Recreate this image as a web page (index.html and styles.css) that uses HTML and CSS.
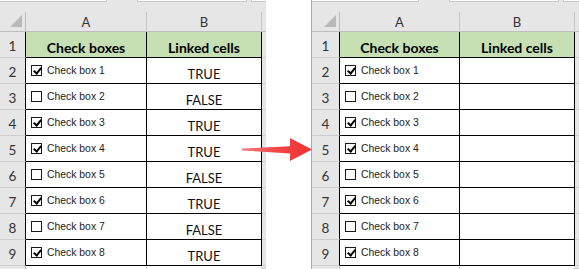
FILE: index.html
```html
<!DOCTYPE html>
<html>
<head>
<meta charset="utf-8">
<link rel="stylesheet" href="styles.css">
</head>
<body>
<div class="page">
  <div class="sheet left">
    <div class="topbar"><span class="box b1"></span><span class="box b2"></span><span class="box b3"></span></div>
    <div class="grid">
      <div class="corner"><span class="tri"></span></div><div class="ch">A</div><div class="ch">B</div><div class="fillh"></div>

      <div class="rh">1</div><div class="cell hd">Check boxes</div><div class="cell hd">Linked cells</div><div class="fill"></div>

      <div class="rh">2</div><div class="cell cb"><span class="chk on"></span>Check box 1</div><div class="cell val">TRUE</div><div class="fill"></div>
      <div class="rh">3</div><div class="cell cb"><span class="chk"></span>Check box 2</div><div class="cell val">FALSE</div><div class="fill"></div>
      <div class="rh">4</div><div class="cell cb"><span class="chk on"></span>Check box 3</div><div class="cell val">TRUE</div><div class="fill"></div>
      <div class="rh">5</div><div class="cell cb"><span class="chk on"></span>Check box 4</div><div class="cell val">TRUE</div><div class="fill"></div>
      <div class="rh">6</div><div class="cell cb"><span class="chk"></span>Check box 5</div><div class="cell val">FALSE</div><div class="fill"></div>
      <div class="rh">7</div><div class="cell cb"><span class="chk on"></span>Check box 6</div><div class="cell val">TRUE</div><div class="fill"></div>
      <div class="rh">8</div><div class="cell cb"><span class="chk"></span>Check box 7</div><div class="cell val">FALSE</div><div class="fill"></div>
      <div class="rh">9</div><div class="cell cb"><span class="chk on"></span>Check box 8</div><div class="cell val">TRUE</div><div class="fill"></div>

      <div class="rh last"></div><div class="cell empty"></div><div class="cell empty"></div><div class="fill"></div>
    </div>
  </div>

  <div class="sheet right">
    <div class="topbar"><span class="box b1"></span><span class="box b2"></span><span class="box b3"></span></div>
    <div class="grid">
      <div class="corner"><span class="tri"></span></div><div class="ch">A</div><div class="ch">B</div><div class="fillh"></div>

      <div class="rh">1</div><div class="cell hd">Check boxes</div><div class="cell hd">Linked cells</div><div class="fill"></div>

      <div class="rh">2</div><div class="cell cb"><span class="chk on"></span>Check box 1</div><div class="cell val"></div><div class="fill"></div>
      <div class="rh">3</div><div class="cell cb"><span class="chk"></span>Check box 2</div><div class="cell val"></div><div class="fill"></div>
      <div class="rh">4</div><div class="cell cb"><span class="chk on"></span>Check box 3</div><div class="cell val"></div><div class="fill"></div>
      <div class="rh">5</div><div class="cell cb"><span class="chk on"></span>Check box 4</div><div class="cell val"></div><div class="fill"></div>
      <div class="rh">6</div><div class="cell cb"><span class="chk"></span>Check box 5</div><div class="cell val"></div><div class="fill"></div>
      <div class="rh">7</div><div class="cell cb"><span class="chk on"></span>Check box 6</div><div class="cell val"></div><div class="fill"></div>
      <div class="rh">8</div><div class="cell cb"><span class="chk"></span>Check box 7</div><div class="cell val"></div><div class="fill"></div>
      <div class="rh">9</div><div class="cell cb"><span class="chk on"></span>Check box 8</div><div class="cell val"></div><div class="fill"></div>

      <div class="rh last"></div><div class="cell empty"></div><div class="cell empty"></div><div class="fill"></div>
    </div>
  </div>

  <svg class="arrow" width="74" height="26" viewBox="240 136 74 26" xmlns="http://www.w3.org/2000/svg">
    <defs>
      <linearGradient id="ag" x1="0" y1="0" x2="1" y2="0">
        <stop offset="0" stop-color="#f87a7a"/>
        <stop offset="0.5" stop-color="#f24545"/>
        <stop offset="1" stop-color="#ee3333"/>
      </linearGradient>
    </defs>
    <polygon fill="url(#ag)" points="242,148.6 290,146.2 290,138 312,149.5 290,161 290,153.6 242,150.4"/>
  </svg>
</div>
</body>
</html>
```
FILE: styles.css
```css
* { box-sizing: border-box; }
html, body { margin: 0; padding: 0; background: #fff; }
body { width: 579px; height: 269px; overflow: hidden; }

.page {
  position: relative;
  display: flex;
  gap: 45px;
  width: 579px;
  height: 269px;
}

.sheet {
  background: #e6e6e6;
  height: 269px;
  display: flex;
  flex-direction: column;
}
.left { width: 266px; }
.right { width: 268px; border-left: 1px solid #a9a9a9; }

.topbar {
  height: 12px;
  display: flex;
  align-items: flex-start;
}
.box {
  height: 2px;
  background: #fff;
  border: 1px solid #c8c8c8;
  border-top: none;
}
.b1 { width: 107px; border-left: none; }
.b2 { width: 110px; margin-left: 30px; }
.b3 { flex: 1; margin-left: 4px; border-right: none; }

.grid {
  display: grid;
  grid-template-rows: 20px repeat(9, 26px) 3px;
  font-family: "Lato", "Liberation Sans", sans-serif;
  color: #222;
}
.left .grid { grid-template-columns: 26px 121px 115px 4px; }
.right .grid { grid-template-columns: 28px 120px 115px 4px; }

.corner {
  position: relative;
  border-right: 1px solid #bdbdbd;
  border-bottom: 1px solid #bdbdbd;
}
.tri {
  position: absolute;
  right: 3px;
  bottom: 4px;
  width: 0;
  height: 0;
  border-left: 12px solid transparent;
  border-bottom: 12px solid #b9b9b9;
}

.ch {
  display: flex;
  align-items: center;
  justify-content: center;
  font-size: 13px;
  color: #333;
  border-right: 1px solid #c6c6c6;
  border-bottom: 1px solid #bdbdbd;
  padding-top: 1px;
}
.fillh { border-bottom: 1px solid #bdbdbd; }

.rh {
  display: flex;
  align-items: center;
  justify-content: center;
  font-size: 13.5px;
  line-height: 16px;
  padding-top: 3px;
  color: #333;
  border-right: 1px solid #000;
  border-bottom: 1px solid #cdcdcd;
}
.rh.last { border-right-color: #bdbdbd; border-bottom: none; }

.cell {
  background: #fff;
  border-right: 1px solid #000;
  border-bottom: 1px solid #000;
}
.cell.hd {
  background: #c6e0b4;
  display: flex;
  align-items: flex-end;
  justify-content: center;
  font-weight: bold;
  font-size: 14px;
  line-height: 16px;
  padding-bottom: 1px;
  color: #000;
}
.cell.val {
  display: flex;
  align-items: flex-end;
  justify-content: center;
  font-size: 13px;
  line-height: 16px;
  padding-bottom: 1px;
  color: #111;
}
.cell.cb {
  display: flex;
  align-items: flex-start;
  padding: 6px 0 0 5px;
  font-family: "Liberation Sans", "DejaVu Sans", sans-serif;
  font-size: 10.4px;
  line-height: 13px;
  color: #222;
}
.cell.empty {
  border-right: 1px solid #d4d4d4;
  border-bottom: none;
}
.fill { border-bottom: 1px solid #d0d0d0; }

.chk {
  position: relative;
  flex: none;
  width: 11px;
  height: 11px;
  margin: 1px 5px 0 0;
  border: 1px solid #1a1a1a;
  background: #fff;
}
.chk.on::after {
  content: "";
  position: absolute;
  left: 2.5px;
  top: 0px;
  width: 3px;
  height: 6px;
  border-right: 2px solid #000;
  border-bottom: 2px solid #000;
  transform: rotate(40deg);
}

.arrow {
  position: absolute;
  left: 240px;
  top: 136px;
}
```
